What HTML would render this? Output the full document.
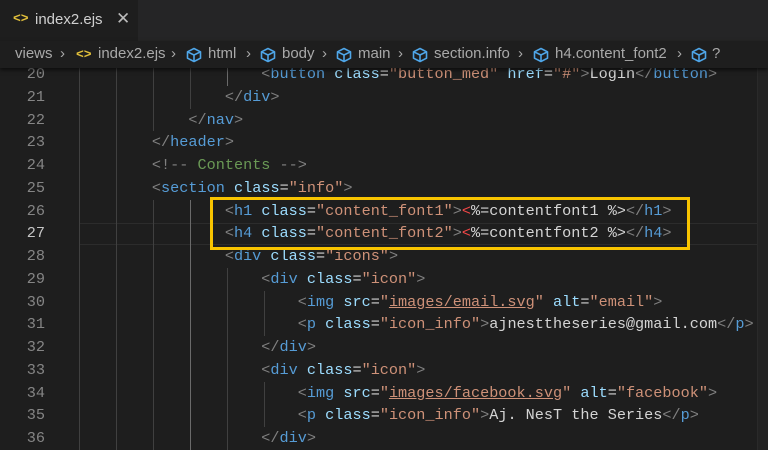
<!DOCTYPE html>
<html><head><meta charset="utf-8"><style>
*{margin:0;padding:0;box-sizing:border-box}
body{width:768px;height:450px;overflow:hidden;background:#1e1e1e;position:relative;font-family:"Liberation Sans",sans-serif}
.tabbar{position:absolute;left:0;top:0;width:768px;height:41px;background:#252526}
.tab{position:absolute;left:0;top:0;width:138px;height:41px;background:#1e1e1e;color:#cfcfcf;font-size:15px}
.tab .ic{position:absolute;left:13px;top:11px;color:#e3c13b;font-weight:bold;font-size:13px;font-family:"Liberation Mono",monospace}
.tab .nm{position:absolute;left:35px;top:11px}
.tab .x{position:absolute;left:116px;top:9px;color:#bbb;font-size:17px}
.bc{position:absolute;left:0;top:41px;width:768px;height:27px;background:#1e1e1e;color:#a9a9a9;font-size:15px;box-shadow:0 2px 4px rgba(0,0,0,.6);z-index:3;white-space:nowrap}
.bc span{position:absolute;top:4px}
.bc svg{position:absolute;top:6px;width:16px;height:16px}
.code{position:absolute;left:0;top:63px;width:768px;font-family:"Liberation Mono",monospace;font-size:15.2px;color:#d4d4d4}
.ln{position:absolute;left:0;width:768px;height:22.75px;line-height:22.75px}
.num{position:absolute;right:723px;color:#858585;text-align:right}
.num.cur{color:#c6c6c6}
.txt{position:absolute;left:79px;white-space:pre}
.g{position:absolute;top:0;width:1px;height:22.75px;background:#404040}
.b{color:#808080}.t{color:#569cd6}.a{color:#9cdcfe}.s{color:#ce9178}.c{color:#6a9955}.r{color:#f44747}
.u{text-decoration:underline}
.box{position:absolute;left:210px;top:197px;width:480px;height:53px;border:3px solid #f8c400;z-index:4}
.curline{position:absolute;left:79px;top:223px;width:689px;height:22px;border-top:1px solid #2c2c2c;border-bottom:1px solid #2c2c2c}
.sb{position:absolute;left:757px;top:68px;width:11px;height:382px;background:#232323;border-left:1px solid #2a2a2a}
</style></head><body>
<svg width="0" height="0" style="position:absolute"><defs><g id="cube" fill="none" stroke="#4fa6e8" stroke-width="1.6" stroke-linejoin="round"><path d="M8 1.5 L14.5 4.8 L14.5 11.2 L8 14.5 L1.5 11.2 L1.5 4.8 Z"/><path d="M1.5 4.8 L8 8 L14.5 4.8 M8 8 L8 14.5"/></g></defs></svg>
<div class="tabbar"><div class="tab"><span class="ic">&lt;&gt;</span><span class="nm">index2.ejs</span><span class="x">✕</span></div></div>
<div class="bc">
<span style="left:15px">views</span><span style="left:60px">›</span>
<span style="left:76px;color:#e3c13b;font-family:'Liberation Mono';font-weight:bold;font-size:13px;top:6px">&lt;&gt;</span>
<span style="left:98px">index2.ejs</span><span style="left:171px">›</span>
<svg style="left:186px" viewBox="0 0 16 16"><use href="#cube"/></svg><span style="left:208px">html</span><span style="left:246px">›</span>
<svg style="left:260px" viewBox="0 0 16 16"><use href="#cube"/></svg><span style="left:282px">body</span><span style="left:322px">›</span>
<svg style="left:336px" viewBox="0 0 16 16"><use href="#cube"/></svg><span style="left:358px">main</span><span style="left:398px">›</span>
<svg style="left:412px" viewBox="0 0 16 16"><use href="#cube"/></svg><span style="left:434px">section.info</span><span style="left:518px">›</span>
<svg style="left:533px" viewBox="0 0 16 16"><use href="#cube"/></svg><span style="left:555px">h4.content_font2</span><span style="left:677px">›</span>
<svg style="left:691px" viewBox="0 0 16 16"><use href="#cube"/></svg><span style="left:712px">?</span>
</div>
<div class="curline"></div>
<div class="code">
<div class="ln" style="top:0"><span class="num">20</span><i class="g" style="left:79px"></i><i class="g" style="left:116px"></i><i class="g" style="left:153px"></i><i class="g" style="left:190px"></i><i class="g" style="left:227px;background:#6a6a6a"></i><span class="txt">                    <span class="b">&lt;</span><span class="t">button</span> <span class="a">class</span>=<span class="s">"button_med"</span> <span class="a">href</span>=<span class="s">"#"</span><span class="b">&gt;</span>Login<span class="b">&lt;/</span><span class="t">button</span><span class="b">&gt;</span></span></div>
<div class="ln" style="top:22.75px"><span class="num">21</span><i class="g" style="left:79px"></i><i class="g" style="left:116px"></i><i class="g" style="left:153px"></i><i class="g" style="left:190px"></i><span class="txt">                <span class="b">&lt;/</span><span class="t">div</span><span class="b">&gt;</span></span></div>
<div class="ln" style="top:45.5px"><span class="num">22</span><i class="g" style="left:79px"></i><i class="g" style="left:116px"></i><i class="g" style="left:153px"></i><span class="txt">            <span class="b">&lt;/</span><span class="t">nav</span><span class="b">&gt;</span></span></div>
<div class="ln" style="top:68.25px"><span class="num">23</span><i class="g" style="left:79px"></i><i class="g" style="left:116px"></i><span class="txt">        <span class="b">&lt;/</span><span class="t">header</span><span class="b">&gt;</span></span></div>
<div class="ln" style="top:91px"><span class="num">24</span><i class="g" style="left:79px"></i><i class="g" style="left:116px"></i><span class="txt">        <span class="b">&lt;!--</span><span class="c"> Contents </span><span class="b">--&gt;</span></span></div>
<div class="ln" style="top:113.75px"><span class="num">25</span><i class="g" style="left:79px"></i><i class="g" style="left:116px"></i><span class="txt">        <span class="b">&lt;</span><span class="t">section</span> <span class="a">class</span>=<span class="s">"info"</span><span class="b">&gt;</span></span></div>
<div class="ln" style="top:136.5px"><span class="num">26</span><i class="g" style="left:79px"></i><i class="g" style="left:116px"></i><i class="g" style="left:153px"></i><i class="g" style="left:190px;background:#6a6a6a"></i><span class="txt">                <span class="b">&lt;</span><span class="t">h1</span> <span class="a">class</span>=<span class="s">"content_font1"</span><span class="b">&gt;</span><span class="r">&lt;</span>%=contentfont1 %&gt;<span class="b">&lt;/</span><span class="t">h1</span><span class="b">&gt;</span></span></div>
<div class="ln" style="top:159.25px"><span class="num cur">27</span><i class="g" style="left:79px"></i><i class="g" style="left:116px"></i><i class="g" style="left:153px"></i><i class="g" style="left:190px;background:#6a6a6a"></i><span class="txt">                <span class="b">&lt;</span><span class="t">h4</span> <span class="a">class</span>=<span class="s">"content_font2"</span><span class="b">&gt;</span><span class="r">&lt;</span>%=contentfont2 %&gt;<span class="b">&lt;/</span><span class="t">h4</span><span class="b">&gt;</span></span></div>
<div class="ln" style="top:182px"><span class="num">28</span><i class="g" style="left:79px"></i><i class="g" style="left:116px"></i><i class="g" style="left:153px"></i><i class="g" style="left:190px;background:#6a6a6a"></i><span class="txt">                <span class="b">&lt;</span><span class="t">div</span> <span class="a">class</span>=<span class="s">"icons"</span><span class="b">&gt;</span></span></div>
<div class="ln" style="top:204.75px"><span class="num">29</span><i class="g" style="left:79px"></i><i class="g" style="left:116px"></i><i class="g" style="left:153px"></i><i class="g" style="left:190px;background:#6a6a6a"></i><i class="g" style="left:227px"></i><span class="txt">                    <span class="b">&lt;</span><span class="t">div</span> <span class="a">class</span>=<span class="s">"icon"</span><span class="b">&gt;</span></span></div>
<div class="ln" style="top:227.5px"><span class="num">30</span><i class="g" style="left:79px"></i><i class="g" style="left:116px"></i><i class="g" style="left:153px"></i><i class="g" style="left:190px;background:#6a6a6a"></i><i class="g" style="left:227px"></i><i class="g" style="left:264px"></i><span class="txt">                        <span class="b">&lt;</span><span class="t">img</span> <span class="a">src</span>=<span class="s">"<span class="u">images/email.svg</span>"</span> <span class="a">alt</span>=<span class="s">"email"</span><span class="b">&gt;</span></span></div>
<div class="ln" style="top:250.25px"><span class="num">31</span><i class="g" style="left:79px"></i><i class="g" style="left:116px"></i><i class="g" style="left:153px"></i><i class="g" style="left:190px;background:#6a6a6a"></i><i class="g" style="left:227px"></i><i class="g" style="left:264px"></i><span class="txt">                        <span class="b">&lt;</span><span class="t">p</span> <span class="a">class</span>=<span class="s">"icon_info"</span><span class="b">&gt;</span>ajnesttheseries@gmail.com<span class="b">&lt;/</span><span class="t">p</span><span class="b">&gt;</span></span></div>
<div class="ln" style="top:273px"><span class="num">32</span><i class="g" style="left:79px"></i><i class="g" style="left:116px"></i><i class="g" style="left:153px"></i><i class="g" style="left:190px;background:#6a6a6a"></i><i class="g" style="left:227px"></i><span class="txt">                    <span class="b">&lt;/</span><span class="t">div</span><span class="b">&gt;</span></span></div>
<div class="ln" style="top:295.75px"><span class="num">33</span><i class="g" style="left:79px"></i><i class="g" style="left:116px"></i><i class="g" style="left:153px"></i><i class="g" style="left:190px;background:#6a6a6a"></i><i class="g" style="left:227px"></i><span class="txt">                    <span class="b">&lt;</span><span class="t">div</span> <span class="a">class</span>=<span class="s">"icon"</span><span class="b">&gt;</span></span></div>
<div class="ln" style="top:318.5px"><span class="num">34</span><i class="g" style="left:79px"></i><i class="g" style="left:116px"></i><i class="g" style="left:153px"></i><i class="g" style="left:190px;background:#6a6a6a"></i><i class="g" style="left:227px"></i><i class="g" style="left:264px"></i><span class="txt">                        <span class="b">&lt;</span><span class="t">img</span> <span class="a">src</span>=<span class="s">"<span class="u">images/facebook.svg</span>"</span> <span class="a">alt</span>=<span class="s">"facebook"</span><span class="b">&gt;</span></span></div>
<div class="ln" style="top:341.25px"><span class="num">35</span><i class="g" style="left:79px"></i><i class="g" style="left:116px"></i><i class="g" style="left:153px"></i><i class="g" style="left:190px;background:#6a6a6a"></i><i class="g" style="left:227px"></i><i class="g" style="left:264px"></i><span class="txt">                        <span class="b">&lt;</span><span class="t">p</span> <span class="a">class</span>=<span class="s">"icon_info"</span><span class="b">&gt;</span>Aj. NesT the Series<span class="b">&lt;/</span><span class="t">p</span><span class="b">&gt;</span></span></div>
<div class="ln" style="top:364px"><span class="num">36</span><i class="g" style="left:79px"></i><i class="g" style="left:116px"></i><i class="g" style="left:153px"></i><i class="g" style="left:190px;background:#6a6a6a"></i><i class="g" style="left:227px"></i><span class="txt">                    <span class="b">&lt;/</span><span class="t">div</span><span class="b">&gt;</span></span></div>
</div>
<div class="sb"></div>
<div class="box"></div>
</body></html>
